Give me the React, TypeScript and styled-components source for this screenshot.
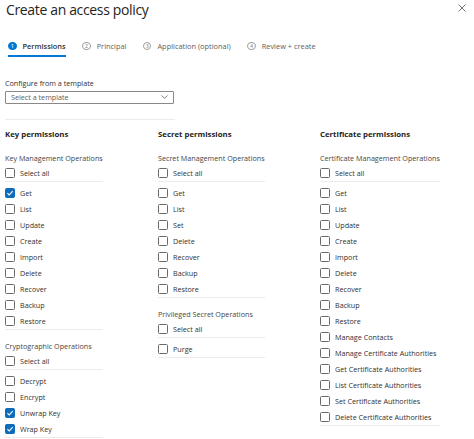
import styled, {createGlobalStyle} from "styled-components";

const GlobalStyle = createGlobalStyle`
    html, body {
        margin: 0;
        padding: 0;
        background: #ffffff;
    }
    body {
        font-family: "Open Sans", "Noto Sans", "Liberation Sans", sans-serif;
        color: #323130;
    }
`;

const Page = styled.div`
    width: 474px;
    height: 439px;
    overflow: hidden;
    padding: 0 5px;
    box-sizing: border-box;
`;

const TitleBar = styled.div`
    display: flex;
    justify-content: space-between;
    align-items: center;
    height: 20px;
`;

const Title = styled.h1`
    margin: 0 0 0 1px;
    font-size: 14px;
    font-weight: 500;
    letter-spacing: -0.35px;
    line-height: 20px;
    color: #252423;
`;

const CloseButton = styled.div`
    display: flex;
    margin: -5px 3px 0 0;
    color: #605e5c;
`;

const Steps = styled.div`
    display: flex;
    gap: 16.5px;
    margin-top: 20px;
    padding-left: 3px;
`;

const Step = styled.div<{ $active?: boolean }>`
    display: flex;
    align-items: center;
    gap: 6px;
    height: 12px;
    padding-bottom: 3px;
    border-bottom: 2px solid ${p => (p.$active ? "#0078d4" : "transparent")};
    font-size: 7.4px;
    font-weight: ${p => (p.$active ? 600 : 400)};
    color: ${p => (p.$active ? "#323130" : "#605e5c")};
`;

const StepNumber = styled.span<{ $active?: boolean }>`
    display: flex;
    align-items: center;
    justify-content: center;
    width: 8.5px;
    height: 8.5px;
    box-sizing: border-box;
    border-radius: 50%;
    font-size: 4.5px;
    font-weight: 600;
    background: ${p => (p.$active ? "#0078d4" : "#ffffff")};
    border: 0.8px solid ${p => (p.$active ? "#0078d4" : "#a19f9d")};
    color: ${p => (p.$active ? "#ffffff" : "#8a8886")};
`;

const FieldLabel = styled.div`
    margin-top: 21px;
    font-size: 7.2px;
    line-height: 10px;
    color: #323130;
`;

const Dropdown = styled.div`
    display: flex;
    align-items: center;
    justify-content: space-between;
    width: 169px;
    height: 12.5px;
    margin-top: 3px;
    padding: 0 5px;
    box-sizing: border-box;
    border: 1px solid #8a8886;
    border-radius: 1px;
    font-size: 7.2px;
    color: #605e5c;
`;

const Divider = styled.div`
    width: 170px;
    height: 1px;
    margin-top: 15px;
    background: #edebe9;
`;

const Columns = styled.div`
    display: grid;
    grid-template-columns: 153px 162px 1fr;
    align-items: start;
`;

const Column = styled.div`
    display: inline-flex;
    flex-direction: column;
    width: max-content;
`;

const ColumnTitle = styled.div`
    margin: 8px 0 2px;
    font-size: 7.8px;
    font-weight: 700;
    line-height: 12px;
    color: #252423;
`;

const Section = styled.div`
    display: flex;
    flex-direction: column;
    margin-top: 11px;
`;

const SectionLabel = styled.div`
    font-size: 7.2px;
    line-height: 10px;
    margin-bottom: 2px;
    color: #484644;
`;

const Row = styled.label`
    display: flex;
    align-items: center;
    gap: 5px;
    height: 16px;
    font-size: 7.2px;
    color: #323130;
`;

const Rule = styled.div<{ $gap?: number }>`
    height: 1px;
    background: #edebe9;
    margin-bottom: ${p => p.$gap ?? 0}px;
`;

const Box = styled.span<{ $checked?: boolean }>`
    display: flex;
    align-items: center;
    justify-content: center;
    width: 10px;
    height: 10px;
    box-sizing: border-box;
    border-radius: 1.5px;
    border: 1px solid ${p => (p.$checked ? "#0f6cbd" : "#6b6a69")};
    background: ${p => (p.$checked ? "#0f6cbd" : "#ffffff")};
`;

type Item = [string, boolean?];

type SectionData = { label: string; items: Item[] };

type ColumnData = { title: string; sections: SectionData[] };

const data: ColumnData[] = [
    {
        title: "Key permissions",
        sections: [
            {
                label: "Key Management Operations",
                items: [["Get", true], ["List"], ["Update"], ["Create"], ["Import"], ["Delete"], ["Recover"], ["Backup"], ["Restore"]],
            },
            {
                label: "Cryptographic Operations",
                items: [["Decrypt"], ["Encrypt"], ["Unwrap Key", true], ["Wrap Key", true]],
            },
        ],
    },
    {
        title: "Secret permissions",
        sections: [
            {
                label: "Secret Management Operations",
                items: [["Get"], ["List"], ["Set"], ["Delete"], ["Recover"], ["Backup"], ["Restore"]],
            },
            {
                label: "Privileged Secret Operations",
                items: [["Purge"]],
            },
        ],
    },
    {
        title: "Certificate permissions",
        sections: [
            {
                label: "Certificate Management Operations",
                items: [
                    ["Get"], ["List"], ["Update"], ["Create"], ["Import"], ["Delete"], ["Recover"], ["Backup"], ["Restore"],
                    ["Manage Contacts"], ["Manage Certificate Authorities"], ["Get Certificate Authorities"],
                    ["List Certificate Authorities"], ["Set Certificate Authorities"], ["Delete Certificate Authorities"],
                ],
            },
        ],
    },
];

const Checkbox = ({checked}: { checked?: boolean }) => (
    <Box $checked={checked}>
        {checked && (
            <svg width="8" height="8" viewBox="0 0 8 8">
                <path d="M1.4 4.2 L3.2 6 L6.7 2.2" fill="none" stroke="#ffffff" strokeWidth="1.1"/>
            </svg>
        )}
    </Box>
);

const CheckRow = ({label, checked}: { label: string; checked?: boolean }) => (
    <Row>
        <Checkbox checked={checked}/>
        {label}
    </Row>
);

const steps = ["Permissions", "Principal", "Application (optional)", "Review + create"];

export default function App() {
    return (
        <>
            <GlobalStyle/>
            <Page>
                <TitleBar>
                    <Title>Create an access policy</Title>
                    <CloseButton>
                        <svg width="8" height="8" viewBox="0 0 8 8">
                            <path d="M0.5 0.5 L7.5 7.5 M7.5 0.5 L0.5 7.5" stroke="#605e5c" strokeWidth="0.9"/>
                        </svg>
                    </CloseButton>
                </TitleBar>

                <Steps>
                    {steps.map((s, i) => (
                        <Step key={s} $active={i === 0}>
                            <StepNumber $active={i === 0}>{i + 1}</StepNumber>
                            {s}
                        </Step>
                    ))}
                </Steps>

                <FieldLabel>Configure from a template</FieldLabel>
                <Dropdown>
                    Select a template
                    <svg width="7" height="4" viewBox="0 0 7 4">
                        <polyline points="0.5,0.5 3.5,3.3 6.5,0.5" fill="none" stroke="#605e5c" strokeWidth="0.8"/>
                    </svg>
                </Dropdown>
                <Divider/>

                <Columns>
                    {data.map(col => (
                        <Column key={col.title}>
                            <ColumnTitle>{col.title}</ColumnTitle>
                            {col.sections.map(sec => (
                                <Section key={sec.label}>
                                    <SectionLabel>{sec.label}</SectionLabel>
                                    <CheckRow label="Select all"/>
                                    <Rule $gap={3}/>
                                    {sec.items.map(([name, checked]) => (
                                        <CheckRow key={name} label={name} checked={checked}/>
                                    ))}
                                    <Rule/>
                                </Section>
                            ))}
                        </Column>
                    ))}
                </Columns>
            </Page>
        </>
    );
}
